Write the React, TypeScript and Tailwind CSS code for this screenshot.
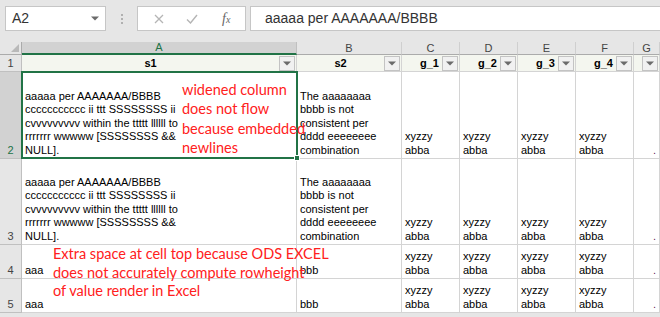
const cols = ['A', 'B', 'C', 'D', 'E', 'F', 'G'];
const heads = ['s1', 's2', 'g_1', 'g_2', 'g_3', 'g_4', ''];

const longA = [
  'aaaaa per AAAAAAA/BBBB',
  'ccccccccccc ii ttt SSSSSSSS ii',
  'cvvvvvvvvv within the ttttt llllll to',
  'rrrrrrr wwwww [SSSSSSSS &&',
  'NULL].',
];
const longB = ['The aaaaaaaa', 'bbbb is not', 'consistent per', 'dddd eeeeeeee', 'combination'];

const rows = [
  { n: 2, a: longA, b: longB },
  { n: 3, a: longA, b: longB },
  { n: 4, a: ['aaa'], b: ['bbb'] },
  { n: 5, a: ['aaa'], b: ['bbb'] },
];

function Arrow() {
  return (
    <svg width="8" height="5" viewBox="0 0 8 5">
      <path d="M0 0.5h8L4 4.5z" fill="#6b6b6b" />
    </svg>
  );
}

function FilterBtn() {
  return (
    <div className="w-[16px] h-[15px] border border-[#c3c3c3] bg-[#f1f1f1] flex items-center justify-center shrink-0">
      <Arrow />
    </div>
  );
}

function Lines({ items, className = '' }: { items: string[]; className?: string }) {
  return (
    <div className={'flex flex-col justify-end h-full pb-[1px] ' + className}>
      {items.map((t, i) => (
        <div key={i} className="leading-[13.5px] whitespace-pre">
          {t}
        </div>
      ))}
    </div>
  );
}

export default function App() {
  return (
    <div className="w-[660px] h-[317px] bg-[#e6e6e6] overflow-hidden font-['Liberation_Sans',Arial,sans-serif] text-black">
      {/* formula bar */}
      <div className="h-[42px] flex items-start pt-[6px]">
        <div className="ml-[5px] w-[101px] h-[25px] bg-white border border-[#c6c6c6] flex items-center justify-between pl-[6px] pr-[6px] text-[14px] text-[#333]">
          <span>A2</span>
          <Arrow />
        </div>
        <div className="w-[31px] h-[25px] flex flex-col items-center justify-center gap-[2px]">
          <div className="w-[2px] h-[2px] bg-[#b0b0b0]" />
          <div className="w-[2px] h-[2px] bg-[#b0b0b0]" />
          <div className="w-[2px] h-[2px] bg-[#b0b0b0]" />
        </div>
        <div className="w-[109px] h-[25px] bg-white border border-[#c6c6c6] flex items-center">
          <svg className="ml-[16px]" width="10" height="10" viewBox="0 0 10 10">
            <path d="M1 1L9 9M9 1L1 9" stroke="#b5b5b5" strokeWidth="1.3" />
          </svg>
          <svg className="ml-[22px]" width="12" height="10" viewBox="0 0 12 10">
            <path d="M1 5.5L4.5 9L11 1" stroke="#b5b5b5" strokeWidth="1.4" fill="none" />
          </svg>
          <span className="ml-[24px] italic font-['Liberation_Serif',serif] text-[14px] text-[#666] leading-none">
            f<span className="text-[10px]">x</span>
          </span>
        </div>
        <div className="ml-[4px] flex-1 h-[25px] bg-white border border-r-0 border-[#c6c6c6] flex items-center pl-[14px] text-[14px] text-[#333]">
          aaaaa per AAAAAAA/BBBB
        </div>
      </div>

      {/* sheet */}
      <div className="relative grid grid-cols-[22px_275px_105px_58px_58px_58px_58px_26px] grid-rows-[13px_17px_87px_86px_34px_34px] text-[11px]">
        {/* header row */}
        <div className="bg-[#e6e6e6] border-r border-b border-[#ababab] flex items-end justify-end p-[2px]">
          <svg width="8" height="8" viewBox="0 0 8 8">
            <path d="M8 0V8H0z" fill="#b9b9b9" />
          </svg>
        </div>
        {cols.map((c) =>
          c === 'A' ? (
            <div key={c} className="bg-[#d2d2d2] border-r border-[#c0c0c0] border-b-2 border-b-[#217346] flex items-center justify-center text-[#217346] leading-none">
              {c}
            </div>
          ) : (
            <div key={c} className="bg-[#e6e6e6] border-r border-[#cfcfcf] border-b border-b-[#ababab] flex items-center justify-center text-[#444] leading-none">
              {c}
            </div>
          )
        )}

        {/* row 1 */}
        <div className="bg-[#e6e6e6] border-r border-b border-[#c0c0c0] flex items-center justify-center text-[#444]">1</div>
        {heads.map((h, i) => (
          <div key={i} className="bg-[#f4f6ef] border-r border-b border-[#d4d4d4] flex items-center pr-[1px]">
            <div className={'flex-1 font-bold ' + (i < 2 ? 'text-center' : 'text-right pr-[3px]')}>{h}</div>
            <FilterBtn />
          </div>
        ))}

        {/* data rows */}
        {rows.map((r) => (
          <div key={r.n} className="contents">
            <div
              className={
                'border-r border-b border-[#c0c0c0] flex items-end justify-center pb-[1px] leading-[13.5px] ' +
                (r.n === 2 ? 'bg-[#d2d2d2] text-[#217346]' : 'bg-[#e6e6e6] text-[#444]')
              }
            >
              {r.n}
            </div>
            <div className="bg-white border-r border-b border-[#d4d4d4] pl-[3px]">
              <Lines items={r.a} />
            </div>
            <div className="bg-white border-r border-b border-[#d4d4d4] pl-[3px]">
              <Lines items={r.b} />
            </div>
            {[0, 1, 2, 3].map((k) => (
              <div key={k} className="bg-white border-r border-b border-[#d4d4d4] pl-[3px]">
                <Lines items={['xyzzy', 'abba']} />
              </div>
            ))}
            <div className="bg-white border-r border-b border-[#d4d4d4] pr-[3px]">
              <Lines items={['.']} className="items-end text-[#6b1a5a]" />
            </div>
          </div>
        ))}

        {/* selection on A2 */}
        <div className="absolute left-[21px] top-[29px] w-[277px] h-[88px] border-2 border-[#217346] pointer-events-none">
          <div className="absolute -right-[4px] -bottom-[4px] w-[6px] h-[6px] bg-[#217346] border border-white" />
        </div>

        {/* annotations */}
        <div className="absolute left-[182px] top-[38px] font-['Lato',sans-serif] text-[14.5px] leading-[19.4px] text-[#ff2020]">
          <div>widened column</div>
          <div>does not flow</div>
          <div>because embedded</div>
          <div>newlines</div>
        </div>
        <div className="absolute left-[53px] top-[203px] font-['Lato',sans-serif] text-[14.5px] leading-[18.7px] text-[#ff2020]">
          <div>Extra space at cell top because ODS EXCEL</div>
          <div>does not accurately compute rowheight</div>
          <div>of value render in Excel</div>
        </div>
      </div>
    </div>
  );
}
